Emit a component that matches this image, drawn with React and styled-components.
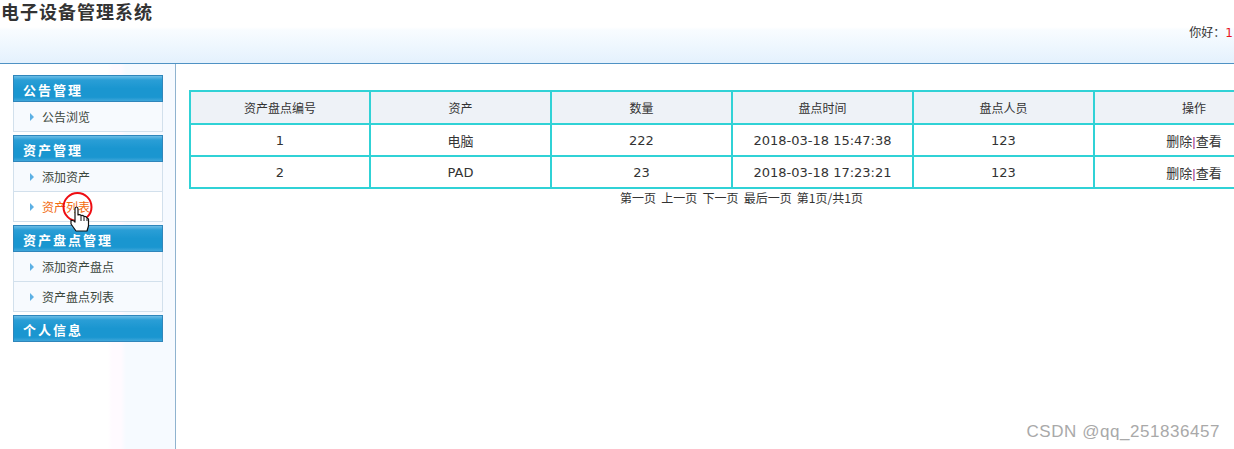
import styled, { createGlobalStyle } from 'styled-components';

const cjk = '"Noto Sans CJK SC", "Liberation Sans", sans-serif';

const GlobalStyle = createGlobalStyle`
  html, body {
    margin: 0;
    padding: 0;
    height: 100%;
    background: #fff;
    overflow: hidden;
  }
  body {
    font-family: ${cjk};
    font-size: 12px;
    color: #333;
  }
`;

const Page = styled.div`
  position: relative;
  width: 1234px;
  height: 449px;
  overflow: hidden;
  display: flex;
  flex-direction: column;
`;

const Header = styled.header`
  height: 63px;
  flex: none;
  border-bottom: 1px solid #4f92c4;
  background: linear-gradient(to bottom, #fff 0, #fff 27px, #f8fcff 30px, #e4f1fd 100%);
  display: flex;
  justify-content: space-between;
`;

const Title = styled.h1`
  margin: 0;
  padding: 0 0 0 1px;
  font-size: 18px;
  line-height: 22px;
  letter-spacing: 1px;
  font-weight: 700;
  color: #333;
`;

const Greeting = styled.div`
  margin-top: 23px;
  line-height: 18px;
  white-space: nowrap;
  padding-right: 1px;
  color: #333;
`;

const UserName = styled.span`
  color: #e8141c;
  font-family: "DejaVu Sans", sans-serif;
`;

const Body = styled.div`
  flex: 1;
  display: flex;
  min-height: 0;
`;

const Sidebar = styled.aside`
  position: relative;
  width: 150px;
  flex: none;
  padding: 11px 12px 0 13px;
  border-right: 1px solid #8fb3cf;
  background: linear-gradient(to right, #fff 0, #fff 108px, #fffaff 112px, #fffaff 121px, #f6faff 126px, #f6faff 100%);
  display: flex;
  flex-direction: column;
  gap: 3px;
`;

const MenuGroup = styled.section`
  display: flex;
  flex-direction: column;
`;

const MenuHeading = styled.h3`
  margin: 0;
  box-sizing: border-box;
  height: 27px;
  padding: 4px 0 0 9px;
  font-size: 13px;
  line-height: 19px;
  letter-spacing: 2px;
  font-weight: 700;
  color: #fff;
  border: 1px solid #2f86bb;
  background: linear-gradient(to bottom, #6dbde6 0, #2a9ed6 4px, #1a96d0 50%, #1a96d0 85%, #3fa6da 100%);
`;

const MenuItem = styled.a`
  box-sizing: border-box;
  height: 30px;
  display: flex;
  align-items: center;
  gap: 8px;
  padding-left: 16px;
  border: 1px solid #d2e0ec;
  border-top: none;
  background: ${(p) => (p.$active ? '#fff' : '#f7fafe')};
  color: ${(p) => (p.$active ? '#f26a0f' : '#3a463c')};
`;

const Arrow = styled.span`
  width: 0;
  height: 0;
  border-left: 4px solid #5cb0e4;
  border-top: 4.5px solid transparent;
  border-bottom: 4.5px solid transparent;
`;

const CursorMark = styled.svg`
  position: absolute;
  left: 62px;
  top: 127px;
  overflow: visible;
`;

const Content = styled.main`
  flex: 1;
  min-width: 0;
  padding: 26px 0 0 13px;
  overflow: hidden;
`;

const Table = styled.table`
  border-collapse: collapse;
  table-layout: fixed;
  width: 1104px;
  border: 2px solid #30d2d6;
`;

const Th = styled.th`
  height: 31px;
  padding: 0;
  font-weight: 400;
  font-size: 12px;
  text-align: center;
  color: #333;
  background: #eef2f7;
  border: 2px solid #30d2d6;
`;

const Td = styled.td`
  height: 30px;
  padding: 0;
  font-size: 13px;
  font-family: "DejaVu Sans", ${cjk};
  text-align: center;
  color: #333;
  border: 2px solid #30d2d6;
`;

const Sep = styled.span`
  font-family: "Liberation Sans", sans-serif;
  color: #a02a8c;
`;

const Pager = styled.div`
  width: 1105px;
  text-align: center;
  line-height: 18px;
  word-spacing: 2.5px;
  color: #333;
`;

const Watermark = styled.div`
  position: absolute;
  right: 14px;
  bottom: 7px;
  font-family: "Liberation Sans", sans-serif;
  font-size: 17px;
  letter-spacing: 0.55px;
  color: #a9a9a9;
`;

const menu = [
  { title: '公告管理', items: ['公告浏览'] },
  { title: '资产管理', items: ['添加资产', '资产列表'] },
  { title: '资产盘点管理', items: ['添加资产盘点', '资产盘点列表'] },
  { title: '个人信息', items: [] },
];

const columns = ['资产盘点编号', '资产', '数量', '盘点时间', '盘点人员', '操作'];

const rows = [
  ['1', '电脑', '222', '2018-03-18 15:47:38', '123'],
  ['2', 'PAD', '23', '2018-03-18 17:23:21', '123'],
];

export default function App() {
  return (
    <Page>
      <GlobalStyle />
      <Header>
        <Title>电子设备管理系统</Title>
        <Greeting>
          你好：<UserName>1</UserName>
        </Greeting>
      </Header>
      <Body>
        <Sidebar>
          {menu.map((group) => (
            <MenuGroup key={group.title}>
              <MenuHeading>{group.title}</MenuHeading>
              {group.items.map((item) => (
                <MenuItem key={item} $active={item === '资产列表'}>
                  <Arrow />
                  {item}
                </MenuItem>
              ))}
            </MenuGroup>
          ))}
          <CursorMark width="32" height="42" viewBox="0 0 32 42">
            <circle cx="15.5" cy="16" r="14" fill="none" stroke="#ee0d12" strokeWidth="2" />
            <path
              d="M14 40 L9 33 L9 29 L12 30 L13 31 L13 18 Q13 16 14.5 16 Q16 16 16 18 L16 24 Q18 23 19 24.5 Q21 24 22 25.5 Q24 25 25 27 L26.5 28 L26.5 35 L25 40 Z"
              fill="#fff"
              stroke="#111"
              strokeWidth="1.2"
              strokeLinejoin="round"
            />
            <path d="M19 25 V30 M22 26 V30 M25 27.5 V30" stroke="#111" strokeWidth="1" fill="none" />
          </CursorMark>
        </Sidebar>
        <Content>
          <Table>
            <colgroup>
              {columns.map((c, i) => (
                <col key={c} width={i === 0 ? 180 : i === 5 ? 200 : 181} />
              ))}
            </colgroup>
            <thead>
              <tr>
                {columns.map((c) => (
                  <Th key={c}>{c}</Th>
                ))}
              </tr>
            </thead>
            <tbody>
              {rows.map((row) => (
                <tr key={row[0]}>
                  {row.map((cell, i) => (
                    <Td key={i}>{cell}</Td>
                  ))}
                  <Td>
                    删除<Sep>|</Sep>查看
                  </Td>
                </tr>
              ))}
            </tbody>
          </Table>
          <Pager>第一页 上一页 下一页 最后一页 第1页/共1页</Pager>
        </Content>
      </Body>
      <Watermark>CSDN @qq_251836457</Watermark>
    </Page>
  );
}
